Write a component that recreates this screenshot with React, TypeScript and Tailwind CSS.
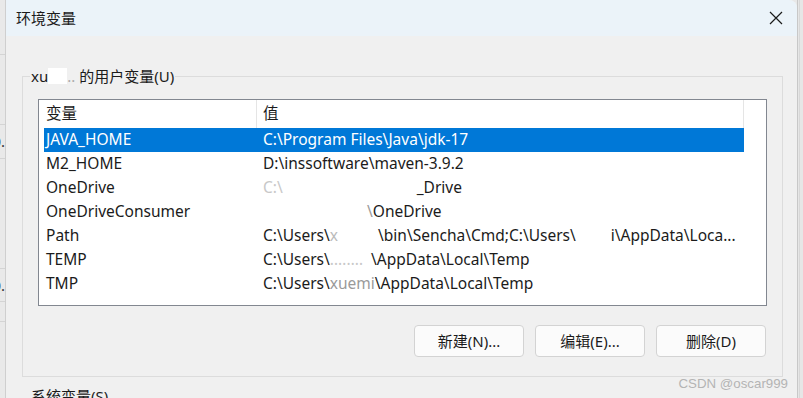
import React from "react";

const F = { fontFamily: '"Noto Sans", "Noto Sans CJK SC", sans-serif' } as React.CSSProperties;

function Blur({ w }: { w: number }) {
  return <span className="inline-block" style={{ width: w }} />;
}

const rows: { name: string; value: React.ReactNode; sel?: boolean }[] = [
  { name: "JAVA_HOME", value: "C:\\Program Files\\Java\\jdk-17", sel: true },
  { name: "M2_HOME", value: "D:\\inssoftware\\maven-3.9.2" },
  {
    name: "OneDrive",
    value: (
      <>
        <span className="text-[#c8c8c8]">C:\</span>
        <Blur w={134} />
        <span>_Drive</span>
      </>
    ),
  },
  {
    name: "OneDriveConsumer",
    value: (
      <>
        <Blur w={104} />
        <span className="text-[#9a9a9a]">\</span>
        <span>OneDrive</span>
      </>
    ),
  },
  {
    name: "Path",
    value: (
      <>
        <span>C:\Users\</span>
        <span className="text-[#bbbbbb]">x</span>
        <Blur w={40} />
        <span>\bin\Sencha\Cmd;C:\Users\</span>
        <Blur w={35} />
        <span>i\AppData\Loca...</span>
      </>
    ),
  },
  {
    name: "TEMP",
    value: (
      <>
        <span>C:\Users\</span>
        <span className="text-[#c8c8c8]">‥‥‥‥</span>
        <Blur w={8} />
        <span>\AppData\Local\Temp</span>
      </>
    ),
  },
  {
    name: "TMP",
    value: (
      <>
        <span>C:\Users\</span>
        <span className="text-[#9a9a9a]">xuemi</span>
        <span>\AppData\Local\Temp</span>
      </>
    ),
  },
];

export default function App() {
  return (
    <div className="w-[803px] h-[398px] overflow-hidden flex bg-[#e8e8e8] text-[#1b1b1b]" style={F}>
      {/* left background strip */}
      <div className="w-[6px] h-full flex flex-col bg-[#e9e9e9] border-r border-[#cfcfcf]">
        <div className="h-[55px] border-b border-[#d4d4d4]" />
        <div className="h-[70px] border-b border-[#d4d4d4]" />
        <div className="h-[33px] flex justify-end items-center overflow-hidden text-[15px] text-[#333]">
          <span className="whitespace-nowrap">0.</span>
        </div>
        <div className="h-[111px] border-t border-b border-[#d4d4d4]" />
        <div className="h-[32px] flex justify-end items-center overflow-hidden text-[15px] text-[#333]">
          <span className="whitespace-nowrap">0.</span>
        </div>
        <div className="h-[21px] border-t border-b border-[#d4d4d4]" />
        <div className="flex-1" />
      </div>

      {/* dialog */}
      <div className="w-[791px] h-full flex flex-col rounded-tr-[8px] overflow-hidden bg-[#f0f0f0] relative">
        <div className="h-[36px] shrink-0 bg-[#ebf3f9] flex items-center justify-between pl-[10px] pr-[14px]">
          <span className="text-[15px] leading-none">环境变量</span>
          <svg width="14" height="14" viewBox="0 0 14 14">
            <path d="M1 1 L13 13 M13 1 L1 13" stroke="#1a1a1a" strokeWidth="1.2" />
          </svg>
        </div>

        <div className="flex flex-col pl-[16px] pt-[30px]">
          <fieldset className="w-[761px] h-[311px] border border-[#dcdcdc] px-[15px] pt-[13px] min-w-0">
            <legend className="ml-[-8px] px-[1px] text-[15px] leading-[20px] flex items-center">
              <span>xu</span>
              <span className="inline-block w-[19px] h-[16px] bg-white" />
              <span className="text-[#aaaaaa]">..</span>
              <span>&nbsp;的用户变量(U)</span>
            </legend>

            <div className="w-[729px] h-[207px] border border-[#828790] bg-white pl-[5px] text-[15.5px]">
              <div className="flex h-[28px] items-center">
                <div className="w-[212px] pl-[2px] h-full flex items-center">变量</div>
                <div className="w-[488px] pl-[6px] h-full flex items-center border-l border-r border-[#e5e5e5]">值</div>
              </div>
              {rows.map((r) => (
                <div
                  key={r.name}
                  className={
                    "flex h-[24px] items-center w-[700px] whitespace-nowrap " +
                    (r.sel ? "bg-[#0078d7] text-white" : "")
                  }
                >
                  <div className="w-[212px] pl-[2px]">{r.name}</div>
                  <div className="w-[488px] pl-[7px] overflow-hidden">{r.value}</div>
                </div>
              ))}
            </div>

            <div className="flex justify-end gap-[11px] mt-[19px] pr-[1px]">
              {["新建(N)...", "编辑(E)...", "删除(D)"].map((t) => (
                <div
                  key={t}
                  className="w-[110px] h-[32px] rounded-[4px] border border-[#d3d3d3] bg-[#fbfbfb] flex items-center justify-center text-[15px]"
                >
                  {t}
                </div>
              ))}
            </div>
          </fieldset>

          <div className="pl-[9px] mt-[9px] text-[15px] leading-[20px]">系统变量(S)</div>
        </div>

        <div
          className="absolute right-[9px] bottom-[8px] text-[13.3px] leading-none text-[#b4b4b4]"
          style={{ fontFamily: '"Liberation Sans", Arial, sans-serif' }}
        >
          CSDN @oscar999
        </div>
      </div>

      {/* right background strip */}
      <div className="w-[6px] h-full bg-[#e6e6e6] border-l border-[#c8c8c8] flex">
        <div className="w-[1px] ml-[1px] h-full bg-[#d8d8d8]" />
      </div>
    </div>
  );
}
